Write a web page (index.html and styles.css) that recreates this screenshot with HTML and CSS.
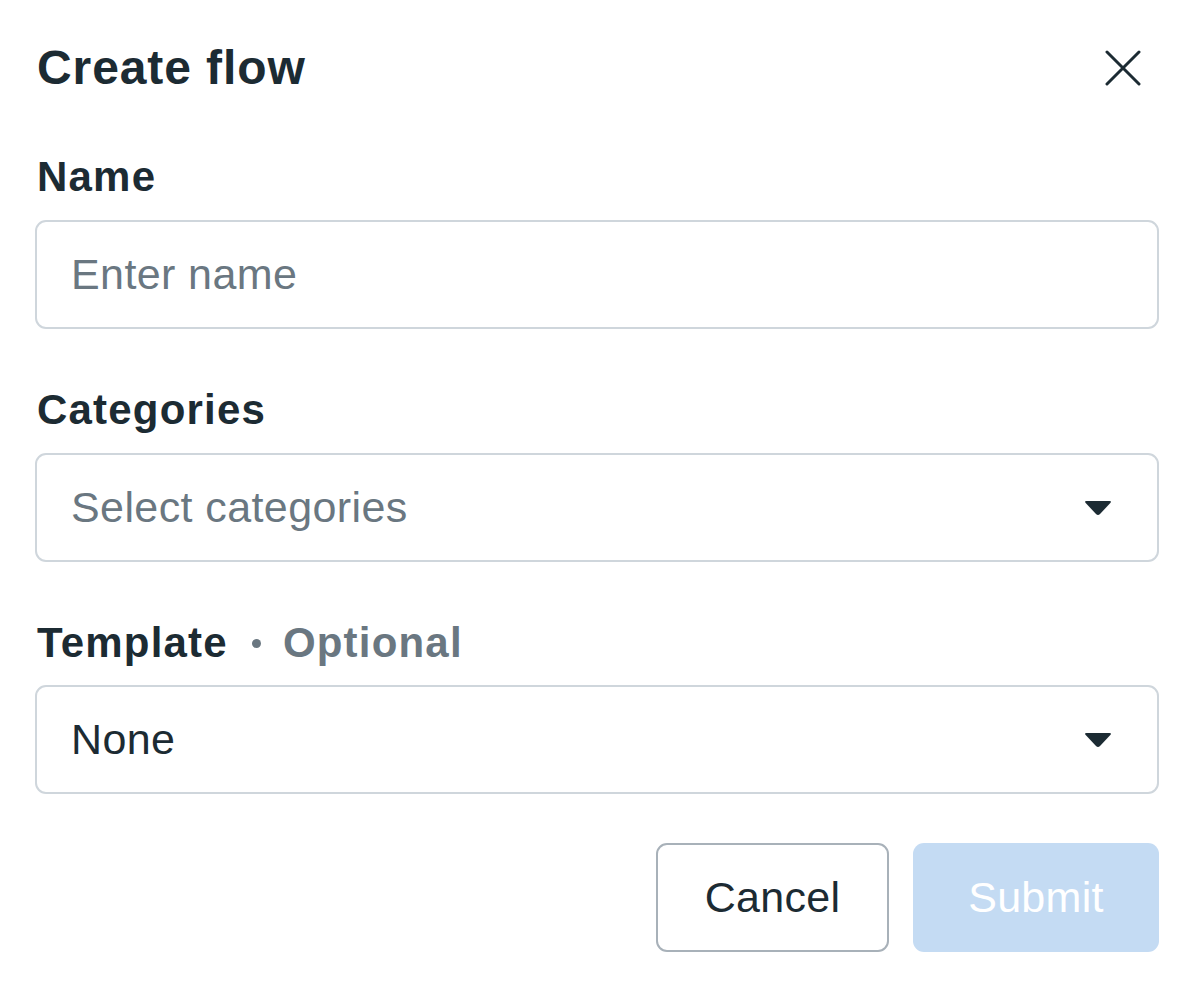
FILE: index.html
```html
<!DOCTYPE html>
<html lang="en">
<head>
<meta charset="utf-8">
<title>Create flow</title>
<link rel="stylesheet" href="styles.css">
</head>
<body>
<div class="dialog">
  <div class="dialog-header">
    <h1 class="dialog-title">Create flow</h1>
    <button class="close-btn" aria-label="Close">
      <svg width="36" height="36" viewBox="0 0 36 36"><path d="M2 2 L34 34 M34 2 L2 34" stroke="#1c2b33" stroke-width="3" stroke-linecap="round" fill="none"/></svg>
    </button>
  </div>

  <div class="field">
    <label class="field-label">Name</label>
    <input class="text-input" type="text" placeholder="Enter name">
  </div>

  <div class="field">
    <label class="field-label">Categories</label>
    <div class="select">
      <span class="select-value placeholder">Select categories</span>
      <svg class="caret" width="30" height="18" viewBox="0 0 30 18"><path d="M3.5 2 H26.5 Q29 2 27.3 4 L17 15 Q15 17 13 15 L2.7 4 Q1 2 3.5 2 Z" fill="#1c2b33"/></svg>
    </div>
  </div>

  <div class="field field-last">
    <label class="field-label field-label-tight">Template<span class="dot"></span><span class="optional">Optional</span></label>
    <div class="select">
      <span class="select-value">None</span>
      <svg class="caret" width="30" height="18" viewBox="0 0 30 18"><path d="M3.5 2 H26.5 Q29 2 27.3 4 L17 15 Q15 17 13 15 L2.7 4 Q1 2 3.5 2 Z" fill="#1c2b33"/></svg>
    </div>
  </div>

  <div class="actions">
    <button class="btn btn-secondary">Cancel</button>
    <button class="btn btn-primary" disabled>Submit</button>
  </div>
</div>
</body>
</html>
```

FILE: styles.css
```css
* { box-sizing: border-box; }
html, body { margin: 0; padding: 0; background: #ffffff; }
body {
  font-family: "Liberation Sans", Arial, sans-serif;
  color: #1c2b33;
}
.dialog {
  width: 1200px;
  padding: 40px 41px 0 35px;
  display: flex;
  flex-direction: column;
}
.dialog-header {
  display: flex;
  align-items: center;
  justify-content: space-between;
  height: 56px;
  margin-bottom: 56px;
}
.dialog-title {
  margin: 0 0 0 2px;
  font-size: 48px;
  line-height: 56px;
  font-weight: 700;
  letter-spacing: 0.9px;
}
.close-btn {
  border: 0;
  background: none;
  padding: 0;
  margin: 0 18px 0 0;
  width: 36px;
  height: 36px;
  display: flex;
  align-items: center;
  justify-content: center;
}
.field {
  display: flex;
  flex-direction: column;
  margin-bottom: 56px;
}
.field-last { margin-bottom: 49px; }
.field-label {
  font-size: 42px;
  line-height: 50px;
  height: 50px;
  font-weight: 700;
  margin: 0 0 18px 2px;
  letter-spacing: 1.2px;
}
.field-label-tight { margin-bottom: 17px; }
.dot {
  display: inline-block;
  width: 9px;
  height: 9px;
  border-radius: 50%;
  background: #6a7781;
  margin: 0 22px 0 24px;
  vertical-align: baseline;
  position: relative;
  top: -9px;
}
.optional { color: #6a7781; }
.text-input, .select {
  width: 100%;
  height: 109px;
  border: 2px solid #cfd6dc;
  border-radius: 11px;
  padding: 0 34px;
  font-family: "Liberation Sans", Arial, sans-serif;
  font-size: 43px;
  letter-spacing: 0.4px;
  color: #1c2b33;
  background: #fff;
  outline: none;
}
.text-input::placeholder { color: #6a7781; opacity: 1; }
.select {
  display: flex;
  align-items: center;
  justify-content: space-between;
  padding-right: 44px;
}
.select-value.placeholder { color: #6a7781; }
.caret { display: block; }
.actions {
  display: flex;
  justify-content: flex-end;
  gap: 24px;
}
.btn {
  height: 109px;
  border-radius: 11px;
  font-family: "Liberation Sans", Arial, sans-serif;
  font-size: 43px;
  letter-spacing: 0.3px;
  padding: 0;
}
.btn-secondary {
  width: 233px;
  background: #fff;
  border: 2px solid #a8b1b9;
  color: #1c2b33;
}
.btn-primary {
  width: 246px;
  background: #c4dbf3;
  border: 0;
  color: #ffffff;
}
```
